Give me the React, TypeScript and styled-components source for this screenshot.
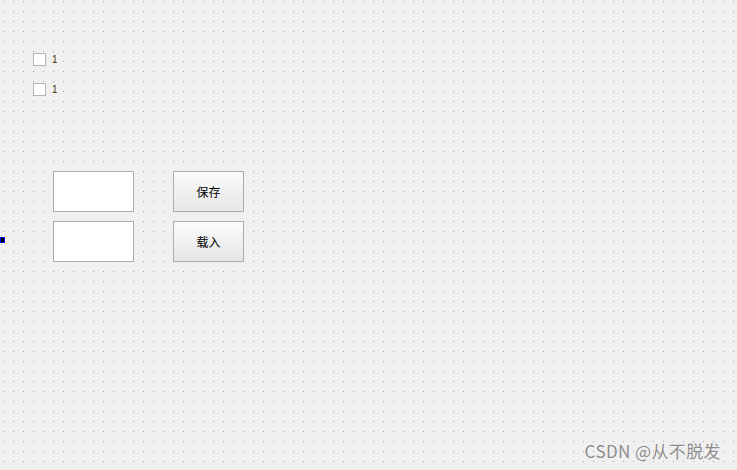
import React from 'react';
import styled, { createGlobalStyle } from 'styled-components';

const GlobalStyle = createGlobalStyle`
  html, body {
    margin: 0;
    padding: 0;
    background: #f0f0f0;
  }
  * {
    box-sizing: border-box;
  }
`;

// designer canvas with the 10px dot grid
const Canvas = styled.div`
  position: relative;
  width: 737px;
  height: 470px;
  overflow: hidden;
  background-color: #f0f0f0;
  background-image: conic-gradient(from 270deg at 1px 1px, #a3a3a3 90deg, transparent 0);
  background-size: 10px 10px;
  background-position: 3px 1px;
  font-family: "Noto Sans CJK SC", "Liberation Sans", sans-serif;
`;

const Layout = styled.div`
  display: flex;
  flex-direction: column;
  padding-top: 53px;
`;

const CheckList = styled.div`
  display: flex;
  flex-direction: column;
  gap: 17px;
  padding-left: 33px;
`;

const CheckRow = styled.label`
  display: flex;
  align-items: center;
  gap: 6px;
  height: 13px;
`;

const Box = styled.span`
  width: 13px;
  height: 13px;
  background: #ffffff;
  border: 1px solid #b4b4b4;
`;

const CheckText = styled.span`
  font-family: "Liberation Sans", sans-serif;
  font-size: 10px;
  line-height: 13px;
  color: #4a3208;
`;

const FormGrid = styled.div`
  display: grid;
  grid-template-columns: 81px 71px;
  grid-auto-rows: 41px;
  column-gap: 39px;
  row-gap: 9px;
  margin-top: 75px;
  padding-left: 53px;
`;

const LineEdit = styled.div`
  background: #ffffff;
  border: 1px solid #ababab;
`;

const PushButton = styled.div`
  display: flex;
  align-items: center;
  justify-content: center;
  border: 1px solid #adadad;
  background: linear-gradient(#fbfbfb, #e6e6e6);
  font-size: 12px;
  color: #000000;
`;

const Handle = styled.span`
  position: absolute;
  left: 0;
  top: 237px;
  width: 5px;
  height: 6px;
  background: #000000;
  border: 1px solid #0000ff;
`;

const Watermark = styled.span`
  position: absolute;
  right: 16px;
  bottom: 7px;
  font-size: 17px;
  letter-spacing: 0.4px;
  color: #8c8c8c;
  text-shadow: 0 0 1px #ffffff;
`;

const items = ['1', '1'];

export default function App() {
  return (
    <>
      <GlobalStyle />
      <Canvas>
        <Layout>
          <CheckList>
            {items.map((t, i) => (
              <CheckRow key={i}>
                <Box />
                <CheckText>{t}</CheckText>
              </CheckRow>
            ))}
          </CheckList>
          <FormGrid>
            <LineEdit />
            <PushButton>保存</PushButton>
            <LineEdit />
            <PushButton>载入</PushButton>
          </FormGrid>
        </Layout>
        <Handle />
        <Watermark>CSDN @从不脱发</Watermark>
      </Canvas>
    </>
  );
}
